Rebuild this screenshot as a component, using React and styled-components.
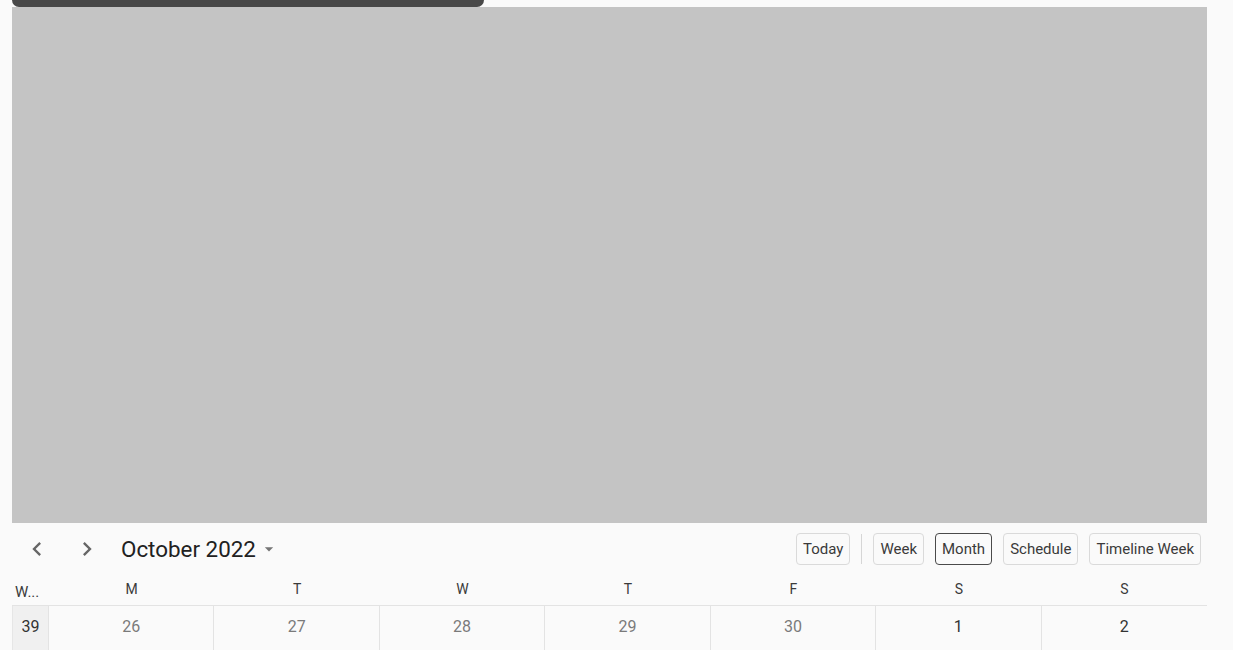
import React from 'react';
import styled, { createGlobalStyle } from 'styled-components';

const GlobalStyle = createGlobalStyle`
    html, body {
        margin: 0;
        padding: 0;
        background: #fafafa;
        font-family: Roboto, "Liberation Sans", Arial, sans-serif;
        overflow: hidden;
    }
`;

const Page = styled.div`
    padding: 0 26px 0 12px;
    height: 650px;
    box-sizing: border-box;
`;

const TopBar = styled.div`
    width: 472px;
    height: 7px;
    background: #484848;
    border-radius: 0 0 8px 8px;
`;

const Placeholder = styled.div`
    height: 516px;
    background: #c4c4c4;
`;

const Toolbar = styled.div`
    display: flex;
    align-items: center;
    height: 52px;
    padding: 0 6px 0 5px;
`;

const NavButton = styled.button`
    width: 40px;
    height: 40px;
    display: flex;
    align-items: center;
    justify-content: center;
    border: none;
    background: transparent;
    padding: 0;
    margin-right: 10px;
    color: #666666;
    cursor: pointer;
`;

const Title = styled.div`
    display: flex;
    align-items: center;
    margin-left: 4px;
    font-size: 22.4px;
    color: #212121;
    gap: 3px;
`;

const Spacer = styled.div`
    flex: 1;
`;

const ViewGroup = styled.div`
    display: flex;
    align-items: center;
    gap: 11px;
`;

const ViewButton = styled.button`
    height: 32px;
    padding: 0 6px;
    font-family: inherit;
    font-size: 15px;
    color: #3a3a3a;
    background: #fafafa;
    border: 1px solid ${p => (p.active ? '#4a4a4a' : '#dadada')};
    border-radius: 4px;
    cursor: pointer;
`;

const Divider = styled.div`
    width: 1px;
    height: 30px;
    background: #d6d6d6;
`;

const HeaderRow = styled.div`
    display: grid;
    grid-template-columns: 37px repeat(7, 1fr);
    height: 30px;
    align-items: center;
    font-size: 14px;
    color: #3a3a3a;
    border-bottom: 1px solid #e3e3e3;
`;

const WeekHeader = styled.div`
    padding: 3px 0 0 3px;
    font-size: 15px;
    white-space: nowrap;
`;

const DayHeader = styled.div`
    text-align: center;
    padding-bottom: 2px;
`;

const WeekRow = styled.div`
    display: grid;
    grid-template-columns: 37px repeat(7, 1fr);
    height: 100px;
`;

const WeekNumber = styled.div`
    background: #f0f0f0;
    border-left: 1px solid #e6e6e6;
    border-right: 1px solid #e3e3e3;
    text-align: center;
    padding-top: 11px;
    font-size: 16px;
    color: #333333;
`;

const DayCell = styled.div`
    border-right: ${p => (p.last ? 'none' : '1px solid #e3e3e3')};
    text-align: center;
    padding-top: 11px;
    font-size: 16px;
    color: ${p => (p.outside ? '#7a7a7a' : '#333333')};
`;

const ChevronLeft = () => (
    <svg width="28" height="28" viewBox="0 0 24 24" fill="currentColor">
        <path d="M15.41 7.41L14 6l-6 6 6 6 1.41-1.41L10.83 12z" />
    </svg>
);

const ChevronRight = () => (
    <svg width="28" height="28" viewBox="0 0 24 24" fill="currentColor">
        <path d="M10 6L8.59 7.41 13.17 12l-4.58 4.59L10 18l6-6z" />
    </svg>
);

const Caret = () => (
    <svg width="20" height="20" viewBox="0 0 24 24" fill="#757575">
        <path d="M7 10l5 5 5-5z" />
    </svg>
);

const dayLetters = ['M', 'T', 'W', 'T', 'F', 'S', 'S'];
const days = [
    { n: 26, outside: true },
    { n: 27, outside: true },
    { n: 28, outside: true },
    { n: 29, outside: true },
    { n: 30, outside: true },
    { n: 1 },
    { n: 2 },
];
const views = ['Week', 'Month', 'Schedule', 'Timeline Week'];

export default function App() {
    return (
        <Page>
            <GlobalStyle />
            <TopBar />
            <Placeholder />
            <Toolbar>
                <NavButton><ChevronLeft /></NavButton>
                <NavButton><ChevronRight /></NavButton>
                <Title>
                    October 2022
                    <Caret />
                </Title>
                <Spacer />
                <ViewGroup>
                    <ViewButton>Today</ViewButton>
                    <Divider />
                    {views.map(v => (
                        <ViewButton key={v} active={v === 'Month'}>{v}</ViewButton>
                    ))}
                </ViewGroup>
            </Toolbar>
            <HeaderRow>
                <WeekHeader>W...</WeekHeader>
                {dayLetters.map((d, i) => (
                    <DayHeader key={`day-${i}`}>{d}</DayHeader>
                ))}
            </HeaderRow>
            <WeekRow>
                <WeekNumber>39</WeekNumber>
                {days.map((d, i) => (
                    <DayCell key={`cell-${i}`} outside={d.outside} last={i === 6}>
                        {d.n}
                    </DayCell>
                ))}
            </WeekRow>
        </Page>
    );
}
